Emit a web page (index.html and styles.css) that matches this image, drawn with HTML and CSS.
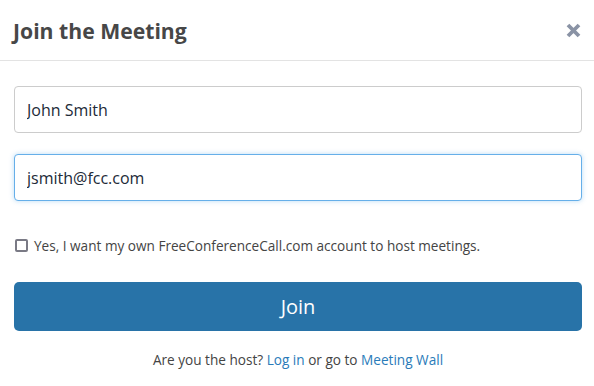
FILE: index.html
```html
<!DOCTYPE html>
<html>
<head>
<meta charset="utf-8">
<link rel="stylesheet" href="styles.css">
</head>
<body>
<div class="modal">
  <div class="modal-header">
    <h1 class="title">Join the Meeting</h1>
    <button class="close" aria-label="Close">
      <svg width="15" height="15" viewBox="0 0 15 15"><path d="M2 2 L13 13 M13 2 L2 13" stroke="#8a93a5" stroke-width="3.8" stroke-linecap="butt"/></svg>
    </button>
  </div>
  <div class="modal-body">
    <input class="field" type="text" value="John Smith">
    <input class="field focused" type="text" value="jsmith@fcc.com">
    <label class="check-row">
      <span class="checkbox"></span>
      <span class="check-label">Yes, I want my own FreeConferenceCall.com account to host meetings.</span>
    </label>
    <button class="join">Join</button>
    <p class="footer">Are you the host? <a href="#">Log in</a> or go to <a href="#">Meeting Wall</a></p>
  </div>
</div>
</body>
</html>
```
FILE: styles.css
```css
* { box-sizing: border-box; }
html, body { margin: 0; padding: 0; background: #fff; }
body { font-family: "Open Sans", "Liberation Sans", sans-serif; color: #333; }
.modal { width: 594px; height: 386px; display: flex; flex-direction: column; }
.modal-header {
  height: 61px;
  border-bottom: 1px solid #e3e3e3;
  display: flex;
  align-items: center;
  justify-content: space-between;
  padding: 0 13px 0 13px;
}
.title { margin: 0; font-size: 21.2px; font-weight: 700; color: #474747; line-height: 1; padding-top: 1px; }
.close { border: 0; background: none; padding: 0; width: 15px; height: 15px; display: flex; }
.modal-body { padding: 25px 12px 0 14px; display: flex; flex-direction: column; }
.field {
  height: 47px;
  border: 1px solid #cccccc;
  border-radius: 4px;
  padding: 0 12px;
  font-family: inherit;
  font-size: 16px;
  color: #222a38;
  margin: 0 0 21px 0;
  background: #fff;
}
.field.focused { border-color: #66afe9; box-shadow: 0 0 5px rgba(102,175,233,0.45); }
.check-row { display: flex; align-items: center; gap: 6px; margin: 14px 0 0 1px; height: 18px; }
.checkbox { width: 13px; height: 13px; border: 2px solid #7a7a85; border-radius: 2px; background: #fff; }
.check-label { font-size: 13.6px; color: #444; }
.join {
  margin-top: 28px;
  height: 49px;
  background: #2873a8;
  border: 0;
  border-radius: 5px;
  color: #fff;
  font-family: inherit;
  font-size: 20px;
}
.footer { margin: 19px 0 0 0; text-align: center; font-size: 13.6px; color: #444; }
.footer a { color: #2a7bb9; text-decoration: none; }
```
